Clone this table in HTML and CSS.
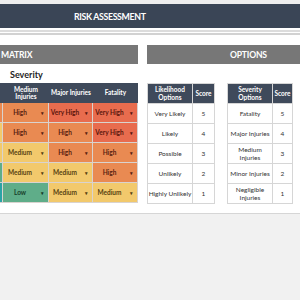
FILE: index.html
```html
<!DOCTYPE html>
<html>
<head>
<meta charset="utf-8">
<link rel="stylesheet" href="styles.css">
</head>
<body>
<div class="page">
  <div class="top-strip"></div>
  <header class="title-bar"><span class="title">RISK ASSESSMENT</span></header>
  <div class="rule rule-a"></div>
  <div class="rule rule-b"></div>

  <main class="content">
    <section class="matrix-panel">
      <div class="bar bar-left">MATRIX</div>
      <div class="sev-label">Severity</div>
      <div class="matrix-head">
        <div class="mh"></div>
        <div class="mh">Medium<br>Injuries</div>
        <div class="mh">Major Injuries</div>
        <div class="mh">Fatality</div>
      </div>
      <div class="matrix-body">
        <div class="mc high"></div>
        <div class="mc high"><span class="val">High</span><span class="dd">▾</span></div>
        <div class="mc vhigh"><span class="val">Very High</span><span class="dd">▾</span></div>
        <div class="mc vhigh"><span class="val">Very High</span><span class="dd">▾</span></div>

        <div class="mc med"></div>
        <div class="mc high"><span class="val">High</span><span class="dd">▾</span></div>
        <div class="mc high"><span class="val">High</span><span class="dd">▾</span></div>
        <div class="mc vhigh"><span class="val">Very High</span><span class="dd">▾</span></div>

        <div class="mc med"></div>
        <div class="mc med"><span class="val">Medium</span><span class="dd">▾</span></div>
        <div class="mc high"><span class="val">High</span><span class="dd">▾</span></div>
        <div class="mc high"><span class="val">High</span><span class="dd">▾</span></div>

        <div class="mc low"></div>
        <div class="mc med"><span class="val">Medium</span><span class="dd">▾</span></div>
        <div class="mc med"><span class="val">Medium</span><span class="dd">▾</span></div>
        <div class="mc high"><span class="val">High</span><span class="dd">▾</span></div>

        <div class="mc vlow"></div>
        <div class="mc low"><span class="val">Low</span><span class="dd">▾</span></div>
        <div class="mc med"><span class="val">Medium</span><span class="dd">▾</span></div>
        <div class="mc med"><span class="val">Medium</span><span class="dd">▾</span></div>
      </div>
    </section>

    <section class="options-panel">
      <div class="bar bar-right">OPTIONS</div>
      <div class="tables">
        <div class="opt-table like">
          <div class="oh">Likelihood<br>Options</div>
          <div class="oh">Score</div>
          <div class="oc">Very Likely</div><div class="oc">5</div>
          <div class="oc">Likely</div><div class="oc">4</div>
          <div class="oc">Possible</div><div class="oc">3</div>
          <div class="oc">Unlikely</div><div class="oc">2</div>
          <div class="oc">Highly Unlikely</div><div class="oc">1</div>
        </div>
        <div class="opt-table sev">
          <div class="oh">Severity<br>Options</div>
          <div class="oh">Score</div>
          <div class="oc">Fatality</div><div class="oc">5</div>
          <div class="oc">Major Injuries</div><div class="oc">4</div>
          <div class="oc">Medium<br>Injuries</div><div class="oc">3</div>
          <div class="oc">Minor Injuries</div><div class="oc">2</div>
          <div class="oc">Negligible<br>Injuries</div><div class="oc">1</div>
        </div>
      </div>
    </section>
  </main>

  <div class="footer-area"></div>
</div>
</body>
</html>
```

FILE: styles.css
```css
html, body {
  margin: 0;
  padding: 0;
}
body {
  width: 300px;
  height: 300px;
  overflow: hidden;
  background: #ffffff;
  font-family: Lato, "Liberation Sans", sans-serif;
}
.page {
  display: flex;
  flex-direction: column;
  height: 300px;
}
.top-strip {
  height: 4px;
  background: #eeeeee;
}
.title-bar {
  height: 24px;
  background: #3a4556;
  display: flex;
  align-items: center;
  padding-left: 74px;
}
.title {
  color: #ffffff;
  font-weight: 700;
  font-size: 8.8px;
  letter-spacing: -0.35px;
}
.rule {
  height: 2px;
  background: #dcdcdc;
}
.rule-a { margin-top: 2px; }
.rule-b { margin-top: 1px; background: #d2d2d2; }

.content {
  display: flex;
  align-items: flex-start;
  gap: 9px;
  padding-top: 10px;
}
.matrix-panel {
  width: 138px;
  flex-shrink: 0;
}
.options-panel {
  flex: 1;
  min-width: 0;
}
.bar {
  height: 19px;
  background: #777777;
  color: #ffffff;
  font-weight: 700;
  font-size: 8.6px;
  letter-spacing: -0.2px;
  display: flex;
  align-items: center;
}
.bar-left { padding-left: 1px; }
.bar-right { padding-left: 83px; }

.sev-label {
  height: 19px;
  padding-left: 10px;
  padding-top: 2px;
  box-sizing: border-box;
  display: flex;
  align-items: center;
  font-weight: 700;
  font-size: 9px;
  color: #1e1e1e;
}

.matrix-head {
  display: grid;
  grid-template-columns: 3px 46px 44px 45px;
  height: 20px;
  background: #3f4a5b;
}
.mh {
  color: #ffffff;
  font-weight: 700;
  font-size: 6.5px;
  line-height: 7.5px;
  display: flex;
  align-items: center;
  justify-content: center;
  text-align: center;
}
.matrix-body {
  display: grid;
  grid-template-columns: 2px 45px 43px 44px;
  grid-auto-rows: 19px;
  gap: 1px;
  padding: 0 1px 1px 0;
  background: #d9d3cf;
}
.mc {
  display: flex;
  align-items: center;
  font-weight: 700;
  font-size: 6.5px;
}
.val {
  flex: 1;
  text-align: center;
}
.dd {
  width: 11px;
  text-align: center;
  font-size: 5px;
}
.high { background: #e98a52; color: #5a2210; }
.vhigh { background: #e86c4e; color: #5a150c; }
.med { background: #f2c96c; color: #574210; }
.low { background: #5fad89; color: #173d2a; }
.vlow { background: #2ba3a6; color: #0c3a3b; }

.tables {
  display: flex;
  gap: 12px;
  margin-top: 19px;
}
.opt-table {
  display: grid;
  grid-auto-rows: 19px;
  gap: 1px;
  padding: 1px;
  background: #d6d6d6;
}
.like { grid-template-columns: 44px 21px; }
.sev { grid-template-columns: 44px 19px; }
.oh {
  background: #3f4a5b;
  color: #ffffff;
  font-weight: 700;
  font-size: 6.5px;
  line-height: 7.5px;
  display: flex;
  align-items: center;
  justify-content: center;
  text-align: center;
}
.oc {
  background: #ffffff;
  color: #333333;
  font-size: 6.5px;
  line-height: 7.5px;
  display: flex;
  align-items: center;
  justify-content: center;
  text-align: center;
}

.footer-area {
  flex: 1;
  margin-top: 9px;
  border-top: 1px solid #d6d6d6;
  background: #f1f1f1;
}
```
